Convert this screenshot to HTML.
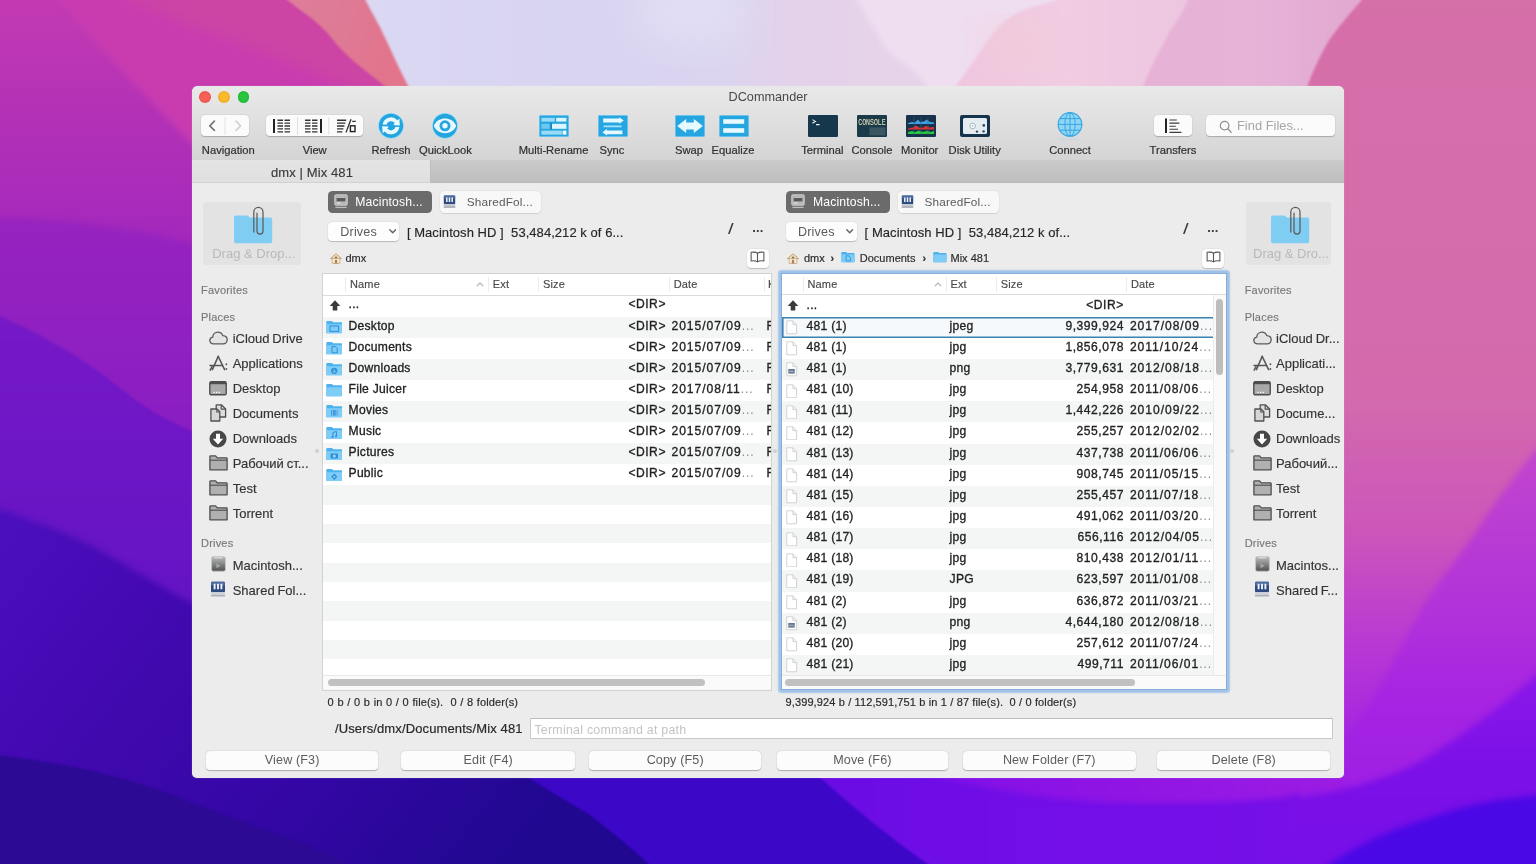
<!DOCTYPE html>
<html lang="en"><head><meta charset="utf-8"><title>DCommander</title>
<style>
*{box-sizing:border-box;margin:0;padding:0}
html,body{width:1536px;height:864px;overflow:hidden;background:#5a18c0}
body{position:relative;font-family:"Liberation Sans",sans-serif;color:#2a2a2a;font-size:13px}
.bg{position:absolute;left:0;top:0}
.win{position:absolute;left:192px;top:86px;width:1152px;height:692px;background:#ececec;border-radius:6px 6px 5px 5px;overflow:hidden;box-shadow:0 0 1px rgba(255,255,255,.6);will-change:transform}
.a{position:absolute}
.tb{position:absolute;left:0;top:0;width:1152px;height:74px;background:linear-gradient(#e9e9e9,#e1e1e1 42%,#d4d4d4)}
.title{position:absolute;left:0;top:3.6px;width:1152px;text-align:center;font-size:12.7px;color:#484848}
.dot{position:absolute;top:5px;width:11.7px;height:11.7px;border-radius:50%}
.lbl{position:absolute;top:57.9px;font-size:11.2px;color:#303030;-webkit-text-stroke:.2px #303030;text-align:center;width:100px;margin-left:-50px;white-space:nowrap}
.btn{position:absolute;background:#fbfbfb;border-radius:4px;box-shadow:0 0.5px 1px rgba(0,0,0,.22),0 0 0 .5px rgba(0,0,0,.03)}
.tabbar{position:absolute;left:0;top:74px;width:1152px;height:23px;background:linear-gradient(#c9c9c9,#bfbfbf);border-top:1px solid #cbcbcb;border-bottom:1px solid #bababa}
.tabact{position:absolute;left:0;top:74px;width:239px;height:23px;background:linear-gradient(#e4e4e4,#e0e0e0);border-bottom:1px solid #d2d2d2;border-right:1px solid #bdbdbd;text-align:center;font-size:13px;line-height:25.2px;color:#3a3a3a;letter-spacing:.1px;padding-left:2px;-webkit-text-stroke:.15px #3a3a3a}
.ic{position:absolute}
/* ---------- sidebars ---------- */
.dd{position:absolute;background:#e3e3e3;border-radius:3px}
.ddt{position:absolute;font-size:13px;color:#b9b9b9;white-space:nowrap;line-height:15px;margin-top:-.8px}
.sh{position:absolute;font-size:11px;color:#787878;line-height:13px;letter-spacing:.2px;-webkit-text-stroke:.15px #787878}
.si{position:absolute;word-spacing:-.8px;font-size:13px;color:#343434;line-height:16px;white-space:nowrap;-webkit-text-stroke:.15px #343434}
/* ---------- panels ---------- */
.ptab{position:absolute;top:105px;height:22px;border-radius:4.5px;font-size:12.2px;line-height:22px;white-space:nowrap;letter-spacing:.15px}
.ptab.on{background:#6b6b6b;color:#fff}
.ptab.off{background:#f8f8f8;color:#5a5a5a;font-size:11.8px;box-shadow:0 0 0 .5px rgba(0,0,0,.04),0 .5px 1px rgba(0,0,0,.10)}
.drv{position:absolute;top:136.4px;height:18.6px;width:71px;background:#fdfdfd;border-radius:4px;box-shadow:0 .5px 1px rgba(0,0,0,.2),0 0 0 .5px rgba(0,0,0,.03);font-size:12.6px;color:#5c5c5c;line-height:20.4px;padding-left:12px;letter-spacing:.15px}
.vol{position:absolute;top:137.5px;font-size:13px;line-height:17px;color:#262626;white-space:nowrap;letter-spacing:.05px;-webkit-text-stroke:.15px #262626}
.pth{position:absolute;top:165px;font-size:11px;line-height:14px;color:#2c2c2c;white-space:nowrap;-webkit-text-stroke:.18px #2c2c2c}
.bk{position:absolute;top:163px;width:22px;height:19px;background:#fdfdfd;border-radius:4px;box-shadow:0 .5px 1px rgba(0,0,0,.2),0 0 0 .5px rgba(0,0,0,.03)}
.tbl{position:absolute;top:188px;height:416px;background:#fff;overflow:hidden}
.th{position:absolute;top:0;height:21.7px;left:0;right:0;background:#fff;border-bottom:1px solid #dcdcdc}
.th span{position:absolute;top:4px;font-size:11px;line-height:13px;color:#484848;letter-spacing:.15px;-webkit-text-stroke:.15px #484848}
.th i{position:absolute;top:3px;width:1px;height:15px;background:#ececec}
.row{position:absolute;left:0;right:0;height:21.1px;font-size:12.1px;line-height:19.6px;color:#222;white-space:nowrap;-webkit-text-stroke:.32px #222}
.row.alt{background:#f4f5f5}
.row span{position:absolute;top:0}
.row svg{position:absolute}
.nm{letter-spacing:.25px}
.sz{text-align:right;letter-spacing:.52px;margin-left:1.4px}
.dt{letter-spacing:.96px;margin-left:-.5px}
.hs{position:absolute;height:7px;border-radius:4px;background:#c1c1c1}
.st{position:absolute;top:609px;font-size:11px;line-height:14px;color:#2a2a2a;white-space:nowrap;letter-spacing:.1px;-webkit-text-stroke:.18px #2a2a2a}
/* ---------- bottom ---------- */
.fb{position:absolute;top:665.4px;height:18.8px;background:#fcfcfc;border-radius:4px;box-shadow:0 .6px 1px rgba(0,0,0,.26),0 0 0 .5px rgba(0,0,0,.04);text-align:center;font-size:12.6px;line-height:19.4px;color:#5c5c5c;letter-spacing:.12px}
.dt b{font-weight:normal;color:#8a8a8a;-webkit-text-stroke:0 transparent}

</style></head>
<body>
<svg class="bg" width="1536" height="864" viewBox="0 0 1536 864">
<defs>
  <linearGradient id="g0" x1="0" y1="0" x2="0" y2="864" gradientUnits="userSpaceOnUse">
    <stop offset="0" stop-color="#c33ab3"/><stop offset="0.12" stop-color="#b532b6"/><stop offset="0.27" stop-color="#a429bc"/>
  </linearGradient>
  <linearGradient id="g0b" x1="0" y1="0" x2="1" y2="0" gradientUnits="userSpaceOnUse">
    <stop offset="0" stop-color="#c940b1"/><stop offset="1" stop-color="#cb3fae"/>
  </linearGradient>
  <linearGradient id="g1" x1="0" y1="218" x2="0" y2="430" gradientUnits="userSpaceOnUse">
    <stop offset="0" stop-color="#9723bf"/><stop offset="1" stop-color="#8a1ec3"/>
  </linearGradient>
  <linearGradient id="g2" x1="0" y1="320" x2="0" y2="600" gradientUnits="userSpaceOnUse">
    <stop offset="0" stop-color="#7619c7"/><stop offset="1" stop-color="#6414c5"/>
  </linearGradient>
  <linearGradient id="g3" x1="0" y1="500" x2="500" y2="900" gradientUnits="userSpaceOnUse">
    <stop offset="0" stop-color="#4c10be"/><stop offset="0.27" stop-color="#4409b3"/><stop offset="0.36" stop-color="#3f09ae"/>
    <stop offset="0.68" stop-color="#3207a3"/><stop offset="0.92" stop-color="#230894"/><stop offset="1" stop-color="#200890"/>
  </linearGradient>
  <linearGradient id="g5" x1="520" y1="0" x2="1200" y2="0" gradientUnits="userSpaceOnUse">
    <stop offset="0" stop-color="#3d08c6"/><stop offset="0.5" stop-color="#4509d2"/><stop offset="1" stop-color="#520ee0"/>
  </linearGradient>
  <linearGradient id="g6" x1="800" y1="0" x2="1536" y2="0" gradientUnits="userSpaceOnUse">
    <stop offset="0" stop-color="#6a0ce4"/><stop offset="0.3" stop-color="#720ee8"/><stop offset="1" stop-color="#7a10e8"/>
  </linearGradient>
  <linearGradient id="gB" x1="0" y1="670" x2="0" y2="864" gradientUnits="userSpaceOnUse">
    <stop offset="0" stop-color="#8c18e8"/><stop offset="0.5" stop-color="#7c10e8"/><stop offset="1" stop-color="#780fe8"/>
  </linearGradient>
  <linearGradient id="gA" x1="900" y1="0" x2="1536" y2="0" gradientUnits="userSpaceOnUse">
    <stop offset="0" stop-color="#7d10e7"/><stop offset="0.25" stop-color="#8c13e5"/><stop offset="0.7" stop-color="#9c1ce3"/><stop offset="1" stop-color="#a622e2"/>
  </linearGradient>
  <linearGradient id="gR" x1="0" y1="0" x2="0" y2="864" gradientUnits="userSpaceOnUse">
    <stop offset="0" stop-color="#d670a9"/><stop offset="0.46" stop-color="#d46aad"/>
    <stop offset="0.62" stop-color="#cb55bb"/><stop offset="0.74" stop-color="#b93ad3"/><stop offset="0.86" stop-color="#a424e2"/><stop offset="1" stop-color="#9a1ee6"/>
  </linearGradient>
  <linearGradient id="gR1" x1="0" y1="450" x2="0" y2="780" gradientUnits="userSpaceOnUse">
    <stop offset="0" stop-color="#c146cd"/><stop offset="0.5" stop-color="#b032da"/><stop offset="0.75" stop-color="#a624e2"/><stop offset="1" stop-color="#a020e4"/>
  </linearGradient>
  <linearGradient id="gR2" x1="0" y1="660" x2="0" y2="864" gradientUnits="userSpaceOnUse">
    <stop offset="0" stop-color="#9a1ee8"/><stop offset="0.5" stop-color="#7a14e8"/><stop offset="1" stop-color="#5e10e4"/>
  </linearGradient>
  <linearGradient id="gT" x1="370" y1="0" x2="870" y2="0" gradientUnits="userSpaceOnUse">
    <stop offset="0" stop-color="#dbd8f3"/><stop offset="0.46" stop-color="#d8d4f1"/><stop offset="0.7" stop-color="#dcd5f0"/>
    <stop offset="0.84" stop-color="#e3d2ea"/><stop offset="1" stop-color="#e6d3ea"/>
  </linearGradient>
  <linearGradient id="gP" x1="950" y1="0" x2="1180" y2="0" gradientUnits="userSpaceOnUse">
    <stop offset="0" stop-color="#efc6de"/><stop offset="0.5" stop-color="#f1cce2"/><stop offset="1" stop-color="#edc6e0"/>
  </linearGradient>
  <linearGradient id="gP2" x1="1140" y1="0" x2="1360" y2="0" gradientUnits="userSpaceOnUse">
    <stop offset="0" stop-color="#e6b2d6"/><stop offset="0.5" stop-color="#e7b4d8"/><stop offset="1" stop-color="#e2a8d0"/>
  </linearGradient>
  <linearGradient id="gC" x1="290" y1="0" x2="400" y2="40" gradientUnits="userSpaceOnUse">
    <stop offset="0" stop-color="#de7e9b"/><stop offset="0.5" stop-color="#df7a95"/><stop offset="1" stop-color="#e2748b"/>
  </linearGradient>
  <filter id="s1" color-interpolation-filters="sRGB" x="-5%" y="-5%" width="110%" height="110%"><feGaussianBlur stdDeviation="1.2"/></filter>
  <filter id="s3" color-interpolation-filters="sRGB" x="-5%" y="-5%" width="110%" height="110%"><feGaussianBlur stdDeviation="3"/></filter>
  <filter id="s8" color-interpolation-filters="sRGB" x="-10%" y="-10%" width="120%" height="120%"><feGaussianBlur stdDeviation="8"/></filter>
  <filter id="s20" color-interpolation-filters="sRGB" x="-20%" y="-20%" width="140%" height="140%"><feGaussianBlur stdDeviation="20"/></filter>
</defs>
<!-- left base -->
<rect x="-10" y="-10" width="1556" height="884" fill="url(#g0)"/>
<!-- pinker magenta upper wedge -->
<path d="M50 -10 C70 12 88 36 104 52 C120 68 132 82 146 96 C165 115 180 132 200 152 L420 152 L420 -10 Z" fill="#c83cb0" filter="url(#s3)"/>
<path d="M113 -10 C180 30 280 50 370 100 L420 100 L420 -10 Z" fill="#cc45a4" filter="url(#s8)"/>
<!-- coral wedge -->
<path d="M276 -10 C290 4 305 12 317 23 C328 32 334 42 341 49 C350 58 356 63 362 68 C372 76 380 82 392 92 L420 92 L372 -10 Z" fill="url(#gC)" filter="url(#s1)"/>
<!-- L1..L4 -->
<path d="M-10 217 C40 219 110 222 200 245 L700 420 V880 H-10 Z" fill="url(#g1)" filter="url(#s3)"/>
<path d="M-10 312 C40 332 90 362 130 396 C160 418 180 426 200 434 L700 600 V880 H-10 Z" fill="url(#g2)" filter="url(#s1)"/>
<path d="M-10 506 C40 522 80 538 110 556 C150 580 180 598 210 612 L600 760 L760 880 H-10 Z" fill="url(#g3)" filter="url(#s3)"/>
<path d="M-10 754 C30 759 62 764 92 771 C130 780 158 789 183 799 C225 815 265 830 306 845 C325 853 340 860 360 872 L-10 880 Z" fill="#2c0a94" filter="url(#s1)"/>
<!-- top pale lavender -->
<path d="M361 -10 C369 8 374 16 380 27 C386 40 390 48 394 57 C400 70 404 78 413 95 L1400 95 V-10 Z" fill="url(#gT)" filter="url(#s1)"/>
<path d="M852 -10 C860 6 864 12 869 20 C874 28 878 35 882 42 C890 54 898 60 908 66 C918 74 924 80 932 95 L1100 95 V-10 Z" fill="#efdef0" filter="url(#s3)"/>
<ellipse cx="690" cy="10" rx="60" ry="40" fill="#e2e0f6" filter="url(#s20)" opacity=".8"/>
<!-- pale pink -->
<path d="M950 95 C960 80 970 66 980 52 C988 40 994 32 1000 26 C1010 16 1018 12 1029 8 C1045 3 1060 1 1078 -10 L1400 -10 V95 Z" fill="url(#gP)" filter="url(#s1)"/>
<ellipse cx="1020" cy="45" rx="40" ry="22" fill="#f3ccd8" filter="url(#s20)" opacity=".7"/>
<!-- mid pink -->
<path d="M1192 -10 C1184 12 1176 22 1169 33 C1162 46 1157 56 1152 66 C1147 76 1144 84 1139 95 L1400 95 V-10 Z" fill="url(#gP2)" filter="url(#s1)"/>
<!-- bottom blue/violet -->
<path d="M500 760 C540 785 565 800 590 815 C615 835 630 846 655 870 L1546 880 V770 Z" fill="#3d07c8" filter="url(#s1)"/>
<path d="M800 760 C825 782 850 804 872 822 C895 840 915 856 940 872 L1546 880 V770 Z" fill="url(#g6)" filter="url(#s1)"/>
<!-- right strong pink -->
<path d="M1370 -10 C1352 12 1339 25 1328 42 C1318 60 1310 76 1305 95 C1300 120 1298 150 1300 200 V880 H1546 V-10 Z" fill="url(#gR)" filter="url(#s1)"/>
<!-- right diagonal layers -->
<path d="M1546 438 C1510 480 1490 510 1475 533 C1455 562 1440 580 1428 598 C1412 625 1402 645 1394 660 C1380 690 1360 720 1330 760 V880 H1546 Z" fill="url(#gR1)" filter="url(#s3)"/>
<!-- bottom -->
<path d="M900 765 C960 785 1040 800 1120 803 C1200 805 1290 800 1344 789 L1344 765 Z" fill="url(#gA)" filter="url(#s3)"/>
<path d="M1546 666 C1510 700 1470 730 1426 758 C1410 768 1390 776 1355 786 C1340 790 1320 794 1290 798 L1290 880 H1546 Z" fill="url(#gB)" filter="url(#s3)"/>
<path d="M1546 795 C1510 798 1490 801 1469 806 C1440 814 1410 824 1384 834 C1360 845 1340 856 1318 872 L1546 880 Z" fill="#4a08e6" filter="url(#s3)"/>
</svg>

<div class="win">
<div class="tb">
  <div class="dot" style="left:7.3px;background:radial-gradient(#f75f57 40%,#dd4d47)"></div>
  <div class="dot" style="left:26.4px;background:radial-gradient(#fbb92c 40%,#dca22a)"></div>
  <div class="dot" style="left:45.6px;background:radial-gradient(#27c63e 40%,#1ca733)"></div>
  <div class="title">DCommander</div>

  <!-- Navigation -->
  <div class="btn" style="left:9px;top:29px;width:48px;height:21.4px"></div>
  <svg class="ic" style="left:9px;top:29px" width="48" height="22" viewBox="0 0 48 22">
    <line x1="24" y1="2" x2="24" y2="20" stroke="#e2e2e2" stroke-width="1"/>
    <path d="M13.4 6.2 L8.8 10.8 L13.4 15.4" fill="none" stroke="#767676" stroke-width="1.7" stroke-linecap="round" stroke-linejoin="round"/>
    <path d="M35 6.2 L39.6 10.8 L35 15.4" fill="none" stroke="#d2d2d2" stroke-width="1.7" stroke-linecap="round" stroke-linejoin="round"/>
  </svg>
  <div class="lbl" style="left:36.3px">Navigation</div>

  <!-- View -->
  <div class="btn" style="left:74px;top:29px;width:97px;height:21.4px"></div>
  <svg class="ic" style="left:74px;top:29px" width="97" height="22" viewBox="0 0 97 22">
    <line x1="31.5" y1="2" x2="31.5" y2="20" stroke="#e0e0e0"/><line x1="62.7" y1="2" x2="62.7" y2="20" stroke="#e0e0e0"/>
    <g stroke="#333" stroke-width="1.35">
      <line x1="8" y1="4" x2="8" y2="18" stroke-width="2" stroke="#222"/>
      <path d="M11.5 5.2h5.5M11.5 8.1h5.5M11.5 11h5.5M11.5 13.9h5.5M11.5 16.8h5.5M18.5 5.2h5.5M18.5 8.1h5.5M18.5 11h5.5M18.5 13.9h5.5M18.5 16.8h5.5"/>
      <line x1="55" y1="4" x2="55" y2="18" stroke-width="2" stroke="#222"/>
      <path d="M39 5.2h5.5M39 8.1h5.5M39 11h5.5M39 13.9h5.5M39 16.8h5.5M46 5.2h5.5M46 8.1h5.5M46 11h5.5M46 13.9h5.5M46 16.8h5.5"/>
      <path d="M71 5.2h9.2M71 8.1h8.4M71 11h7.4M71 13.9h6.4M71 16.8h5.4"/>
      <path d="M85 4.2 L80 17.6" stroke-width="1.3"/>
      <rect x="84.4" y="10.8" width="4.6" height="5.8" fill="none" stroke-width="1.4" stroke="#222"/>
      <path d="M86.2 6.4h3.6"/>
    </g>
  </svg>
  <div class="lbl" style="left:122.7px">View</div>

  <!-- Refresh -->
  <svg class="ic" style="left:185px;top:26px" width="28" height="28" viewBox="0 0 28 28">
    <circle cx="14" cy="13.8" r="12.9" fill="#93daf6"/>
    <circle cx="14" cy="13.8" r="12.1" fill="#23a5e0"/>
    <path d="M5.6 12.6 A8.5 8.5 0 0 1 20.4 8.2 L22.4 6.4 L22.8 13.4 L15.8 13 L17.8 11 A4.8 4.8 0 0 0 9.4 12.8 Z" fill="#e8faff"/>
    <path d="M22.4 15 A8.5 8.5 0 0 1 7.6 19.4 L5.6 21.2 L5.2 14.2 L12.2 14.6 L10.2 16.6 A4.8 4.8 0 0 0 18.6 14.8 Z" fill="#e8faff"/>
    <circle cx="14" cy="13.8" r="2.7" fill="#23a5e0"/>
  </svg>
  <div class="lbl" style="left:199px">Refresh</div>

  <!-- QuickLook -->
  <svg class="ic" style="left:239px;top:26px" width="28" height="28" viewBox="0 0 28 28">
    <circle cx="14" cy="13.8" r="12.9" fill="#93daf6"/>
    <circle cx="14" cy="13.8" r="12.1" fill="#23a5e0"/>
    <path d="M2.8 13.8 C6.6 4 21.4 4 25.2 13.8 C21.4 23.6 6.6 23.6 2.8 13.8 Z" fill="#e8faff"/>
    <circle cx="14" cy="13.8" r="5.5" fill="#23a5e0"/>
    <circle cx="14" cy="13.8" r="2.7" fill="#e8faff"/>
  </svg>
  <div class="lbl" style="left:253.4px">QuickLook</div>

  <!-- Multi-Rename -->
  <svg class="ic" style="left:347px;top:29px" width="30" height="22" viewBox="0 0 30 22">
    <rect x=".4" y=".4" width="29.2" height="21.2" rx="1" fill="#25a6e1" stroke="#62c2ee" stroke-width=".8"/>
    <rect x="2.4" y="2.8" width="13.4" height="3.8" fill="#9adcf8"/><rect x="17.2" y="2.8" width="10.2" height="3.8" fill="#dcf5ff"/>
    <rect x="2.4" y="8.8" width="8.2" height="5" fill="#6fc8f2"/><rect x="11.6" y="8" width="1" height="6.4" fill="#1b6f9c"/><rect x="13" y="8.8" width="14.4" height="5" fill="#dcf5ff"/>
    <rect x="2.4" y="15.6" width="20.4" height="4" fill="#9adcf8"/><rect x="23.6" y="15.6" width="3.8" height="4" fill="#eefaff"/>
  </svg>
  <div class="lbl" style="left:361.6px">Multi-Rename</div>

  <!-- Sync -->
  <svg class="ic" style="left:406px;top:29px" width="30" height="22" viewBox="0 0 30 22">
    <rect x=".4" y=".4" width="29.2" height="21.2" rx="1" fill="#25a6e1" stroke="#62c2ee" stroke-width=".8"/>
    <path d="M5.2 3.6h16v-1.4l4.6 3.3l-4.6 3.3v-1.4h-16z" fill="#e6f9ff"/>
    <path d="M5.6 10.4h18v1.8h-18z" fill="#a9e2fa"/>
    <path d="M24.4 15.4h-15.4v-1.4l-4.6 3.3l4.6 3.3v-1.4h15.4z" fill="#e6f9ff"/>
  </svg>
  <div class="lbl" style="left:420px">Sync</div>

  <!-- Swap -->
  <svg class="ic" style="left:482.5px;top:29px" width="30" height="22" viewBox="0 0 30 22">
    <rect x=".4" y=".4" width="29.2" height="21.2" rx="1" fill="#25a6e1" stroke="#62c2ee" stroke-width=".8"/>
    <path d="M2.2 11 L11.2 4 V7.4 H18.8 V4 L27.8 11 L18.8 18 V14.6 H11.2 V18 Z" fill="#e6f9ff"/>
  </svg>
  <div class="lbl" style="left:497px">Swap</div>

  <!-- Equalize -->
  <svg class="ic" style="left:526.5px;top:29px" width="30" height="22" viewBox="0 0 30 22">
    <rect x=".4" y=".4" width="29.2" height="21.2" rx="1" fill="#25a6e1" stroke="#62c2ee" stroke-width=".8"/>
    <rect x="4.2" y="4.2" width="21" height="4.6" fill="#e6f9ff"/><rect x="4.2" y="13.2" width="21" height="4.6" fill="#e6f9ff"/>
  </svg>
  <div class="lbl" style="left:541px">Equalize</div>

  <!-- Terminal -->
  <svg class="ic" style="left:615.6px;top:29px" width="30" height="22" viewBox="0 0 30 22">
    <rect width="30" height="22" rx="1.2" fill="#15384c"/>
    <path d="M4.4 4.6 L7.4 6.4 L4.4 8.2" fill="none" stroke="#e8f2f6" stroke-width="1.1"/>
    <path d="M8 9.6h3.6" stroke="#e8f2f6" stroke-width="1.1"/>
  </svg>
  <div class="lbl" style="left:630.4px">Terminal</div>

  <!-- Console -->
  <svg class="ic" style="left:665.4px;top:29px" width="30" height="22" viewBox="0 0 30 22">
    <rect width="30" height="22" rx="1.2" fill="#1a3a4a"/>
    <rect x="12.4" y="12.4" width="16" height="8" fill="#3b5563"/>
    <text x="15" y="10" font-family="Liberation Mono,monospace" font-size="9.6" textLength="27.4" lengthAdjust="spacingAndGlyphs" text-anchor="middle" fill="#f1ecc0">CONSOLE</text>
  </svg>
  <div class="lbl" style="left:680px">Console</div>

  <!-- Monitor -->
  <svg class="ic" style="left:713.6px;top:29px" width="30" height="22" viewBox="0 0 30 22">
    <rect width="30" height="22" rx="1.2" fill="#17324a"/>
    <path d="M2 8 L6 7 L9 7.6 L12 4.6 L14 7 L18 6.6 L21 4.4 L24 7 L28 7.4 V9 H2 Z" fill="#3f9fe8"/>
    <path d="M2 13.4 L7 12.6 L10 10.6 L13 12.4 L17 12.8 L20 10.8 L23 12.6 L28 12 V14.4 H2 Z" fill="#e3312f"/>
    <path d="M2 19 V17 L6 16 L9 17 L13 15.6 L17 17 L21 15.8 L25 17 L28 16 V19 Z" fill="#27c93e"/>
    <path d="M8 2v18M15 2v18M22 2v18" stroke="#2f5a7c" stroke-width=".6"/>
  </svg>
  <div class="lbl" style="left:727.7px">Monitor</div>

  <!-- Disk Utility -->
  <svg class="ic" style="left:768.3px;top:29px" width="30" height="22" viewBox="0 0 30 22">
    <rect width="30" height="22" rx="2" fill="#15344c"/>
    <rect x="3" y="3" width="24" height="16" rx="1.6" fill="#e4ecf1"/>
    <circle cx="12.6" cy="11" r="2.8" fill="#f6f9fb" stroke="#9eacb6" stroke-width=".9"/>
    <circle cx="12.6" cy="11" r=".8" fill="#9aa8b2"/>
    <circle cx="23.8" cy="10.4" r="1.3" fill="#26465c"/><circle cx="23.6" cy="16.4" r="1.2" fill="#26465c"/><circle cx="17" cy="16.6" r="1.2" fill="#26465c"/>
    
  </svg>
  <div class="lbl" style="left:782.7px">Disk Utility</div>

  <!-- Connect -->
  <svg class="ic" style="left:864px;top:25px" width="28" height="30" viewBox="0 0 28 30">
    <circle cx="14" cy="13.4" r="11.8" fill="#8fd6f6" stroke="#37a6e0" stroke-width="1.2"/>
    <g fill="none" stroke="#37a6e0" stroke-width="1">
      <ellipse cx="14" cy="13.4" rx="5.2" ry="11.8"/>
      <path d="M14 1.6v23.6M2.2 13.4h23.6M4 7.6h20M4 19.2h20"/>
    </g>
    <path d="M3 28.2h22" stroke="#a9d6ef" stroke-width=".8" stroke-dasharray="1.4 .6"/>
  </svg>
  <div class="lbl" style="left:878px">Connect</div>

  <!-- Transfers -->
  <div class="btn" style="left:962px;top:29px;width:38px;height:21.4px"></div>
  <svg class="ic" style="left:962px;top:29px" width="38" height="22" viewBox="0 0 38 22">
    <line x1="12" y1="3.6" x2="12" y2="18" stroke="#222" stroke-width="2"/>
    <path d="M15.4 5h7.4M15.4 8.1h10M15.4 11.2h6.4M15.4 14.3h8.6M15.4 17.4h12" stroke="#3c3c3c" stroke-width="1.1"/>
  </svg>
  <div class="lbl" style="left:981px">Transfers</div>

  <!-- Search -->
  <div class="btn" style="left:1014px;top:29px;width:129px;height:21.4px"></div>
  <svg class="ic" style="left:1026px;top:33px" width="16" height="16" viewBox="0 0 16 16">
    <circle cx="6.6" cy="6.6" r="4.3" fill="none" stroke="#8e8e8e" stroke-width="1.2"/><path d="M9.8 9.8l3.4 3.6" stroke="#8e8e8e" stroke-width="1.3" stroke-linecap="round"/>
  </svg>
  <div class="a" style="left:1045px;top:32px;font-size:12.9px;color:#a6a6a6;line-height:16px;letter-spacing:0">Find Files...</div>
</div>
<div class="tabbar"></div>
<div class="tabact">dmx | Mix 481</div>

<!-- left sidebar -->
<div class="dd" style="left:11.2px;top:115.8px;width:98px;height:63px"></div>
<svg class="ic" style="left:42.4px;top:117px" width="39" height="42" viewBox="0 0 39 42"><path d="M0 14.4 Q0 12.6 1.8 12.6 H12.6 Q14 12.6 14.8 13.6 L15.6 14.6 H36.4 Q38.2 14.6 38.2 16.4 V38.4 Q38.2 40.2 36.4 40.2 H1.8 Q0 40.2 0 38.4 Z" fill="#80cdf4"/><path d="M20.6 8.6 V26.4 A3 3 0 0 0 26.6 26.4 V7.4 A4.6 4.6 0 0 0 17.4 7.4 V27.4" fill="none" stroke="#5b5b5b" stroke-width="1.25" stroke-linecap="round" transform="translate(2.4 1.6)"/></svg>
<div class="ddt" style="left:20.2px;top:160.6px">Drag &amp; Drop...</div>
<div class="sh" style="left:9px;top:197.6px">Favorites</div>
<div class="sh" style="left:9px;top:224.7px">Places</div>
<svg style="left:17px;top:245px" class="ic" width="19" height="14" viewBox="0 0 19 14"><path d="M4.6 12.9 C2.4 12.9 .8 11.4 .8 9.5 C.8 7.8 2 6.5 3.7 6.2 C3.9 3.3 6.1 1.1 8.9 1.1 C11.2 1.1 13.1 2.5 13.8 4.6 C16.3 4.7 18.2 6.5 18.2 8.8 C18.2 11.1 16.4 12.9 14 12.9 Z" fill="#e4e4e4" stroke="#5a5a5a" stroke-width="1.3" stroke-linejoin="round"/></svg>
<div class="si" style="left:40.7px;top:245.0px">iCloud Drive</div>
<svg style="left:17px;top:269px" class="ic" width="19" height="17" viewBox="0 0 19 17"><g fill="none" stroke="#555" stroke-width="1.5" stroke-linecap="round"><path d="M9.2 1.4 L3.4 14.6"/><path d="M9.2 1.4 L15.6 14.6"/><path d="M1 10.6 H13.4"/><path d="M1.2 15.2 L3 11.6"/><path d="M17.4 9.2v.1M17.4 14v.1" stroke-width="1.8"/></g></svg>
<div class="si" style="left:40.7px;top:270.3px">Applications</div>
<svg style="left:17.4px;top:295px" class="ic" width="18" height="15" viewBox="0 0 18 15"><rect x=".8" y=".8" width="16.4" height="13" rx="1.4" fill="#a9a9a9" stroke="#4e4e4e" stroke-width="1.4"/><rect x=".8" y=".8" width="16.4" height="2.4" fill="#4e4e4e"/><path d="M4.4 11.4h1.3M7 11.4h1.3M9.6 11.4h1.3" stroke="#fff" stroke-width="1.4"/></svg>
<div class="si" style="left:40.7px;top:295.1px">Desktop</div>
<svg style="left:17.8px;top:318px" class="ic" width="17" height="18" viewBox="0 0 17 18"><path d="M6.2 .8 H11.4 L15.6 5 V13 H6.2 Z" fill="#dedede" stroke="#505050" stroke-width="1.3" stroke-linejoin="round"/><path d="M11.2 1 V5.2 H15.4" fill="none" stroke="#505050" stroke-width="1.2"/><path d="M.9 5 H7 L9.8 7.8 V17 H.9 Z" fill="#d6d6d6" stroke="#505050" stroke-width="1.3" stroke-linejoin="round"/><path d="M6.8 5.2 V8 H9.6" fill="none" stroke="#505050" stroke-width="1.1"/></svg>
<div class="si" style="left:40.7px;top:319.8px">Documents</div>
<svg style="left:17.2px;top:343.6px" class="ic" width="18" height="18" viewBox="0 0 18 18"><circle cx="9" cy="9" r="8.5" fill="#474747"/><path d="M7 3.8h4v5h3.2L9 14.4 3.8 8.8H7z" fill="#fff"/></svg>
<div class="si" style="left:40.7px;top:344.7px">Downloads</div>
<svg style="left:17px;top:369px" class="ic" width="19" height="16" viewBox="0 0 19 16"><path d="M.9 14.8 V1.6 Q.9 .9 1.6 .9 H6.6 L8.2 2.8 H17.4 Q18.1 2.8 18.1 3.5 V14.8 Z" fill="#b0b0b0" stroke="#4e4e4e" stroke-width="1.3" stroke-linejoin="round"/><path d="M1 5.2H18" stroke="#4e4e4e" stroke-width="1.1"/></svg>
<div class="si" style="left:40.7px;top:369.7px">Рабочий ст...</div>
<svg style="left:17px;top:394px" class="ic" width="19" height="16" viewBox="0 0 19 16"><path d="M.9 14.8 V1.6 Q.9 .9 1.6 .9 H6.6 L8.2 2.8 H17.4 Q18.1 2.8 18.1 3.5 V14.8 Z" fill="#b0b0b0" stroke="#4e4e4e" stroke-width="1.3" stroke-linejoin="round"/><path d="M1 5.2H18" stroke="#4e4e4e" stroke-width="1.1"/></svg>
<div class="si" style="left:40.7px;top:394.7px">Test</div>
<svg style="left:17px;top:419px" class="ic" width="19" height="16" viewBox="0 0 19 16"><path d="M.9 14.8 V1.6 Q.9 .9 1.6 .9 H6.6 L8.2 2.8 H17.4 Q18.1 2.8 18.1 3.5 V14.8 Z" fill="#b0b0b0" stroke="#4e4e4e" stroke-width="1.3" stroke-linejoin="round"/><path d="M1 5.2H18" stroke="#4e4e4e" stroke-width="1.1"/></svg>
<div class="si" style="left:40.7px;top:419.7px">Torrent</div>
<div class="sh" style="left:9px;top:451.4px">Drives</div>
<svg style="left:19px;top:470.4px" class="ic" width="15" height="16" viewBox="0 0 15 16"><defs><linearGradient id="hdl" x1="0" y1="0" x2="0" y2="1"><stop offset="0" stop-color="#bcbebe"/><stop offset=".5" stop-color="#858787"/><stop offset="1" stop-color="#505252"/></linearGradient></defs><rect x=".6" y=".6" width="13.8" height="14.6" rx="1.6" fill="url(#hdl)" stroke="#c4c4c4" stroke-width=".7"/><rect x="3.4" y="1.2" width="8" height="1.2" fill="#e6e6e6" opacity=".8"/><path d="M5.4 7.4 L9.6 9.8 L5.4 12.2Z" fill="#b9baba" opacity=".7"/></svg>
<div class="si" style="left:40.7px;top:471.5px">Macintosh...</div>
<svg style="left:18.4px;top:495.4px" class="ic" width="16" height="16" viewBox="0 0 16 16"><rect x="1" y=".8" width="14" height="10.4" rx="1" fill="#2f4c80"/><rect x="1" y=".8" width="14" height="3.6" rx="1" fill="#4d6c9f"/><path d="M4.6 2.8v5.4M8 2.8v5.4M11.4 2.8v5.4" stroke="#eef3fb" stroke-width="1.9"/><path d="M.6 11.2h14.8l-.8 3.4H1.4z" fill="#cfd3d9"/><rect x=".8" y="14" width="14.4" height="1.4" rx=".6" fill="#aab0b8"/></svg>
<div class="si" style="left:40.7px;top:496.5px">Shared Fol...</div>
<!-- left panel -->
<div class="ptab on" style="left:136.3px;width:104px;padding-left:27px">Macintosh...</div>
<svg class="ic" style="left:141.6px;top:108px" width="14" height="15" viewBox="0 0 14 15"><rect x=".7" y=".7" width="12.6" height="10.6" rx="1.2" fill="#b9b9b9" stroke="#cfcfcf" stroke-width=".8"/><rect x="2.6" y="2.4" width="8.8" height="5" fill="#5a5a5a"/><rect x="2.6" y="2.4" width="8.8" height="1.4" fill="#d9d9d9"/><path d="M3 9h3.4" stroke="#eee" stroke-width="1"/><path d="M1.4 13.4h11.2" stroke="#bdbdbd" stroke-width="1.3"/></svg>
<div class="ptab off" style="left:247.8px;width:101.6px;padding-left:27px">SharedFol...</div>
<svg class="ic" style="left:251.4px;top:108.6px" width="13" height="14" viewBox="0 0 13 14"><rect x=".8" y=".6" width="11.4" height="8.6" rx=".8" fill="#2f4c80"/><rect x=".8" y=".6" width="11.4" height="3" rx=".8" fill="#4d6c9f"/><path d="M3.8 2.4v4.6M6.5 2.4v4.6M9.2 2.4v4.6" stroke="#eef3fb" stroke-width="1.5"/><path d="M.4 9.2h12.2l-.6 2.8H1z" fill="#c6c9cf"/><rect x=".6" y="11.6" width="11.8" height="1.2" rx=".5" fill="#9b9fa7"/></svg>
<div class="drv" style="left:136.3px">Drives</div>
<svg class="ic" style="left:196.6px;top:143.2px" width="7.4" height="5" viewBox="0 0 9 6"><path d="M1 1 L4.5 4.6 L8 1" fill="none" stroke="#646464" stroke-width="1.7" stroke-linecap="round" stroke-linejoin="round"/></svg>
<div class="vol" style="left:214.9px">[ Macintosh HD ]&nbsp; 53,484,212 k of 6...</div>
<div class="a" style="left:535.0px;top:134.6px;font-size:14px;font-weight:bold;font-style:italic;color:#3a3a3a;line-height:16px;margin-left:1.6px;margin-top:.6px">/</div>
<div class="a" style="left:560.2px;top:134px;font-size:13px;font-weight:bold;color:#3a3a3a;line-height:16px;letter-spacing:.2px">...</div>
<svg class="ic" style="left:137.6px;top:166.8px" width="12" height="11" viewBox="0 0 12 11"><path d="M6 .8 L11.4 5.6 H9.8 V10.4 H2.2 V5.6 H.6 Z" fill="#f8f2e6" stroke="#c3a173" stroke-width=".8" stroke-linejoin="round"/><path d="M6 .8 L11.4 5.6 H.6 Z" fill="#ecd9b8" stroke="#c3a173" stroke-width=".8" stroke-linejoin="round"/><rect x="4.8" y="6.8" width="2.4" height="3.6" fill="#b5804a"/><circle cx="6" cy="4.4" r="1" fill="#7a6a5a"/></svg>
<div class="pth" style="left:153.5px">dmx</div>
<div class="bk" style="left:554.6px"></div>
<svg class="ic" style="left:558.2px;top:165px" width="15" height="12.2" viewBox="0 0 16 13"><path d="M8 2.4 C6.4 1.2 3.6 1 1.2 1.4 V10.6 C3.6 10.2 6.4 10.4 8 11.6 C9.6 10.4 12.4 10.2 14.8 10.6 V1.4 C12.4 1 9.6 1.2 8 2.4 Z M8 2.4 V11.6" fill="none" stroke="#555" stroke-width="1.15" stroke-linejoin="round"/></svg>
<div class="tbl" style="left:131.4px;width:447.8px;box-shadow:0 0 0 1px #d2d2d2">
<div class="th"><span style="left:26.6px">Name</span><span style="left:169.4px">Ext</span><span style="left:219.6px">Size</span><span style="left:350.3px">Date</span><span style="left:444.6px">K</span><i style="left:21.6px"></i><i style="left:165.0px"></i><i style="left:214.4px"></i><i style="left:345.2px"></i><i style="left:441.0px"></i><svg class="ic" style="left:153.0px;top:8px" width="8" height="5" viewBox="0 0 8 5"><path d="M.8 4.2 L4 1 L7.2 4.2" fill="none" stroke="#b0b0b0" stroke-width="1.1"/></svg></div>
<div class="row" style="top:21.4px"><svg style="left:5.6px;top:4.4px" width="12" height="11" viewBox="0 0 12 11"><path d="M6 .3 L11.3 6 H8.3 V10.4 H3.7 V6 H.7 Z" fill="#3a3a3a"/></svg><span class="nm" style="left:25.2px">...</span><span class="sz" style="left:276.6px;width:64.6px">&lt;DIR&gt;</span></div>
<div class="row alt" style="top:42.5px"><svg class="ic" style="left:2.6px;top:3.6px" width="16.4" height="13.6" viewBox="0 0 16.4 13.6"><path d="M.3 1.9 Q.3 1 1.2 1 H5.6 Q6.2 1 6.6 1.5 L7.2 2.2 H15.2 Q16.1 2.2 16.1 3.1 V12.4 Q16.1 13.3 15.2 13.3 H1.2 Q.3 13.3 .3 12.4 Z" fill="#4fb2ee"/><path d="M.3 4.2 H16.1 V12.4 Q16.1 13.3 15.2 13.3 H1.2 Q.3 13.3 .3 12.4 Z" fill="#7fcdf7"/><rect x="4" y="6" width="8.6" height="5.4" fill="none" stroke="#2d8fd6" stroke-width="1"/></svg><span class="nm" style="left:25.2px">Desktop</span><span class="sz" style="left:276.6px;width:64.6px">&lt;DIR&gt;</span><span class="dt" style="left:348.6px">2015/07/09<b>...</b></span><span style="left:443.2px">R</span></div>
<div class="row" style="top:63.6px"><svg class="ic" style="left:2.6px;top:3.6px" width="16.4" height="13.6" viewBox="0 0 16.4 13.6"><path d="M.3 1.9 Q.3 1 1.2 1 H5.6 Q6.2 1 6.6 1.5 L7.2 2.2 H15.2 Q16.1 2.2 16.1 3.1 V12.4 Q16.1 13.3 15.2 13.3 H1.2 Q.3 13.3 .3 12.4 Z" fill="#4fb2ee"/><path d="M.3 4.2 H16.1 V12.4 Q16.1 13.3 15.2 13.3 H1.2 Q.3 13.3 .3 12.4 Z" fill="#7fcdf7"/><path d="M6 5.6h3.4l1.8 1.8v4.4H6z" fill="none" stroke="#2d8fd6" stroke-width="1"/></svg><span class="nm" style="left:25.2px">Documents</span><span class="sz" style="left:276.6px;width:64.6px">&lt;DIR&gt;</span><span class="dt" style="left:348.6px">2015/07/09<b>...</b></span><span style="left:443.2px">R</span></div>
<div class="row alt" style="top:84.7px"><svg class="ic" style="left:2.6px;top:3.6px" width="16.4" height="13.6" viewBox="0 0 16.4 13.6"><path d="M.3 1.9 Q.3 1 1.2 1 H5.6 Q6.2 1 6.6 1.5 L7.2 2.2 H15.2 Q16.1 2.2 16.1 3.1 V12.4 Q16.1 13.3 15.2 13.3 H1.2 Q.3 13.3 .3 12.4 Z" fill="#4fb2ee"/><path d="M.3 4.2 H16.1 V12.4 Q16.1 13.3 15.2 13.3 H1.2 Q.3 13.3 .3 12.4 Z" fill="#7fcdf7"/><circle cx="8.2" cy="8.8" r="3.1" fill="#2d8fd6"/><path d="M8.2 7v3.4M6.8 9.2l1.4 1.4 1.4-1.4" stroke="#9fd8f8" stroke-width=".8" fill="none"/></svg><span class="nm" style="left:25.2px">Downloads</span><span class="sz" style="left:276.6px;width:64.6px">&lt;DIR&gt;</span><span class="dt" style="left:348.6px">2015/07/09<b>...</b></span><span style="left:443.2px">R</span></div>
<div class="row" style="top:105.8px"><svg class="ic" style="left:2.6px;top:3.6px" width="16.4" height="13.6" viewBox="0 0 16.4 13.6"><path d="M.3 1.9 Q.3 1 1.2 1 H5.6 Q6.2 1 6.6 1.5 L7.2 2.2 H15.2 Q16.1 2.2 16.1 3.1 V12.4 Q16.1 13.3 15.2 13.3 H1.2 Q.3 13.3 .3 12.4 Z" fill="#4fb2ee"/><path d="M.3 4.2 H16.1 V12.4 Q16.1 13.3 15.2 13.3 H1.2 Q.3 13.3 .3 12.4 Z" fill="#7fcdf7"/></svg><span class="nm" style="left:25.2px">File Juicer</span><span class="sz" style="left:276.6px;width:64.6px">&lt;DIR&gt;</span><span class="dt" style="left:348.6px">2017/08/11<b>...</b></span><span style="left:443.2px">R</span></div>
<div class="row alt" style="top:126.9px"><svg class="ic" style="left:2.6px;top:3.6px" width="16.4" height="13.6" viewBox="0 0 16.4 13.6"><path d="M.3 1.9 Q.3 1 1.2 1 H5.6 Q6.2 1 6.6 1.5 L7.2 2.2 H15.2 Q16.1 2.2 16.1 3.1 V12.4 Q16.1 13.3 15.2 13.3 H1.2 Q.3 13.3 .3 12.4 Z" fill="#4fb2ee"/><path d="M.3 4.2 H16.1 V12.4 Q16.1 13.3 15.2 13.3 H1.2 Q.3 13.3 .3 12.4 Z" fill="#7fcdf7"/><rect x="5" y="6" width="6.6" height="5.6" fill="#3b9be0"/><path d="M6.4 6v5.6M10.2 6v5.6" stroke="#9fd8f8" stroke-width=".7"/></svg><span class="nm" style="left:25.2px">Movies</span><span class="sz" style="left:276.6px;width:64.6px">&lt;DIR&gt;</span><span class="dt" style="left:348.6px">2015/07/09<b>...</b></span><span style="left:443.2px">R</span></div>
<div class="row" style="top:148.0px"><svg class="ic" style="left:2.6px;top:3.6px" width="16.4" height="13.6" viewBox="0 0 16.4 13.6"><path d="M.3 1.9 Q.3 1 1.2 1 H5.6 Q6.2 1 6.6 1.5 L7.2 2.2 H15.2 Q16.1 2.2 16.1 3.1 V12.4 Q16.1 13.3 15.2 13.3 H1.2 Q.3 13.3 .3 12.4 Z" fill="#4fb2ee"/><path d="M.3 4.2 H16.1 V12.4 Q16.1 13.3 15.2 13.3 H1.2 Q.3 13.3 .3 12.4 Z" fill="#7fcdf7"/><path d="M7 11V6.4l3.6-.8v4.6" fill="none" stroke="#2d8fd6" stroke-width="1"/><circle cx="6.4" cy="11" r="1" fill="#2d8fd6"/><circle cx="10" cy="10.2" r="1" fill="#2d8fd6"/></svg><span class="nm" style="left:25.2px">Music</span><span class="sz" style="left:276.6px;width:64.6px">&lt;DIR&gt;</span><span class="dt" style="left:348.6px">2015/07/09<b>...</b></span><span style="left:443.2px">R</span></div>
<div class="row alt" style="top:169.1px"><svg class="ic" style="left:2.6px;top:3.6px" width="16.4" height="13.6" viewBox="0 0 16.4 13.6"><path d="M.3 1.9 Q.3 1 1.2 1 H5.6 Q6.2 1 6.6 1.5 L7.2 2.2 H15.2 Q16.1 2.2 16.1 3.1 V12.4 Q16.1 13.3 15.2 13.3 H1.2 Q.3 13.3 .3 12.4 Z" fill="#4fb2ee"/><path d="M.3 4.2 H16.1 V12.4 Q16.1 13.3 15.2 13.3 H1.2 Q.3 13.3 .3 12.4 Z" fill="#7fcdf7"/><rect x="4.6" y="6.4" width="7.4" height="5" rx=".6" fill="#2d8fd6"/><circle cx="8.3" cy="8.9" r="1.5" fill="#9fd8f8"/></svg><span class="nm" style="left:25.2px">Pictures</span><span class="sz" style="left:276.6px;width:64.6px">&lt;DIR&gt;</span><span class="dt" style="left:348.6px">2015/07/09<b>...</b></span><span style="left:443.2px">R</span></div>
<div class="row" style="top:190.2px"><svg class="ic" style="left:2.6px;top:3.6px" width="16.4" height="13.6" viewBox="0 0 16.4 13.6"><path d="M.3 1.9 Q.3 1 1.2 1 H5.6 Q6.2 1 6.6 1.5 L7.2 2.2 H15.2 Q16.1 2.2 16.1 3.1 V12.4 Q16.1 13.3 15.2 13.3 H1.2 Q.3 13.3 .3 12.4 Z" fill="#4fb2ee"/><path d="M.3 4.2 H16.1 V12.4 Q16.1 13.3 15.2 13.3 H1.2 Q.3 13.3 .3 12.4 Z" fill="#7fcdf7"/><path d="M8.3 5.6l3 3.2-3 3.2-3-3.2z" fill="#2d8fd6"/><circle cx="8.3" cy="8.8" r="1" fill="#9fd8f8"/></svg><span class="nm" style="left:25.2px">Public</span><span class="sz" style="left:276.6px;width:64.6px">&lt;DIR&gt;</span><span class="dt" style="left:348.6px">2015/07/09<b>...</b></span><span style="left:443.2px">R</span></div>
<div class="row alt" style="top:211.3px;height:19.35px"></div>
<div class="row" style="top:230.65px;height:19.35px"></div>
<div class="row alt" style="top:250.0px;height:19.35px"></div>
<div class="row" style="top:269.35px;height:19.35px"></div>
<div class="row alt" style="top:288.7px;height:19.35px"></div>
<div class="row" style="top:308.05px;height:19.35px"></div>
<div class="row alt" style="top:327.4px;height:19.35px"></div>
<div class="row" style="top:346.75px;height:19.35px"></div>
<div class="row alt" style="top:366.1px;height:19.35px"></div>
<div class="row" style="top:385.45px;height:19.35px"></div>
<div class="row alt" style="top:404.8px;height:19.35px"></div>
<div class="a" style="left:0;right:0;top:401.2px;height:14px;background:#fafafa;border-top:1px solid #e8e8e8"></div>
<div class="hs" style="left:4.6px;top:404.8px;width:377px"></div>
</div>
<div class="st" style="left:135.6px;word-spacing:.45px">0 b / 0 b in 0 / 0 file(s).&nbsp; 0 / 8 folder(s)</div>
<div class="a" style="left:123.4px;top:362.6px;width:4px;height:4px;border-radius:50%;background:#d0d0d0"></div>
<!-- right panel -->
<div class="ptab on" style="left:594.0px;width:104px;padding-left:27px">Macintosh...</div>
<svg class="ic" style="left:599.3px;top:108px" width="14" height="15" viewBox="0 0 14 15"><rect x=".7" y=".7" width="12.6" height="10.6" rx="1.2" fill="#b9b9b9" stroke="#cfcfcf" stroke-width=".8"/><rect x="2.6" y="2.4" width="8.8" height="5" fill="#5a5a5a"/><rect x="2.6" y="2.4" width="8.8" height="1.4" fill="#d9d9d9"/><path d="M3 9h3.4" stroke="#eee" stroke-width="1"/><path d="M1.4 13.4h11.2" stroke="#bdbdbd" stroke-width="1.3"/></svg>
<div class="ptab off" style="left:705.5px;width:101.6px;padding-left:27px">SharedFol...</div>
<svg class="ic" style="left:709.1px;top:108.6px" width="13" height="14" viewBox="0 0 13 14"><rect x=".8" y=".6" width="11.4" height="8.6" rx=".8" fill="#2f4c80"/><rect x=".8" y=".6" width="11.4" height="3" rx=".8" fill="#4d6c9f"/><path d="M3.8 2.4v4.6M6.5 2.4v4.6M9.2 2.4v4.6" stroke="#eef3fb" stroke-width="1.5"/><path d="M.4 9.2h12.2l-.6 2.8H1z" fill="#c6c9cf"/><rect x=".6" y="11.6" width="11.8" height="1.2" rx=".5" fill="#9b9fa7"/></svg>
<div class="drv" style="left:594.0px">Drives</div>
<svg class="ic" style="left:654.3px;top:143.2px" width="7.4" height="5" viewBox="0 0 9 6"><path d="M1 1 L4.5 4.6 L8 1" fill="none" stroke="#646464" stroke-width="1.7" stroke-linecap="round" stroke-linejoin="round"/></svg>
<div class="vol" style="left:672.6px">[ Macintosh HD ]&nbsp; 53,484,212 k of...</div>
<div class="a" style="left:990.0px;top:134.6px;font-size:14px;font-weight:bold;font-style:italic;color:#3a3a3a;line-height:16px;margin-left:1.6px;margin-top:.6px">/</div>
<div class="a" style="left:1015.2px;top:134px;font-size:13px;font-weight:bold;color:#3a3a3a;line-height:16px;letter-spacing:.2px">...</div>
<svg class="ic" style="left:595.3px;top:166.8px" width="12" height="11" viewBox="0 0 12 11"><path d="M6 .8 L11.4 5.6 H9.8 V10.4 H2.2 V5.6 H.6 Z" fill="#f8f2e6" stroke="#c3a173" stroke-width=".8" stroke-linejoin="round"/><path d="M6 .8 L11.4 5.6 H.6 Z" fill="#ecd9b8" stroke="#c3a173" stroke-width=".8" stroke-linejoin="round"/><rect x="4.8" y="6.8" width="2.4" height="3.6" fill="#b5804a"/><circle cx="6" cy="4.4" r="1" fill="#7a6a5a"/></svg>
<div class="pth" style="left:612px">dmx</div>
<div class="pth" style="left:638.4px;font-weight:bold;font-size:11px">›</div>
<svg class="ic" style="left:649.3px;top:165.4px" width="13.8" height="11.6" viewBox="0 0 16.4 13.6"><path d="M.3 1.9 Q.3 1 1.2 1 H5.6 Q6.2 1 6.6 1.5 L7.2 2.2 H15.2 Q16.1 2.2 16.1 3.1 V12.4 Q16.1 13.3 15.2 13.3 H1.2 Q.3 13.3 .3 12.4 Z" fill="#4fb2ee"/><path d="M.3 4.2 H16.1 V12.4 Q16.1 13.3 15.2 13.3 H1.2 Q.3 13.3 .3 12.4 Z" fill="#7fcdf7"/><path d="M6 5.6h3.4l1.8 1.8v4.4H6z" fill="none" stroke="#2d8fd6" stroke-width="1"/></svg>
<div class="pth" style="left:667.8px">Documents</div>
<div class="pth" style="left:730.4px;font-weight:bold;font-size:11px">›</div>
<svg class="ic" style="left:740.8px;top:165.4px" width="13.8" height="11.6" viewBox="0 0 16.4 13.6"><path d="M.3 1.9 Q.3 1 1.2 1 H5.6 Q6.2 1 6.6 1.5 L7.2 2.2 H15.2 Q16.1 2.2 16.1 3.1 V12.4 Q16.1 13.3 15.2 13.3 H1.2 Q.3 13.3 .3 12.4 Z" fill="#4fb2ee"/><path d="M.3 4.2 H16.1 V12.4 Q16.1 13.3 15.2 13.3 H1.2 Q.3 13.3 .3 12.4 Z" fill="#7fcdf7"/></svg>
<div class="pth" style="left:758.5px">Mix 481</div>
<div class="bk" style="left:1010.2px"></div>
<svg class="ic" style="left:1013.6px;top:165px" width="15" height="12.2" viewBox="0 0 16 13"><path d="M8 2.4 C6.4 1.2 3.6 1 1.2 1.4 V10.6 C3.6 10.2 6.4 10.4 8 11.6 C9.6 10.4 12.4 10.2 14.8 10.6 V1.4 C12.4 1 9.6 1.2 8 2.4 Z M8 2.4 V11.6" fill="none" stroke="#555" stroke-width="1.15" stroke-linejoin="round"/></svg>
<div class="a" style="left:586.8px;top:185px;width:450.6px;height:420.6px;border-radius:2.5px;background:#a2c2e6;box-shadow:0 0 0 1px rgba(170,200,232,.75),0 0 2px 1px rgba(170,200,232,.5)"></div>
<div class="tbl" style="left:589.6px;top:187.8px;width:444.8px;height:415px;box-shadow:0 0 0 1px #84aedc">
<div class="th"><span style="left:25.9px">Name</span><span style="left:168.9px">Ext</span><span style="left:219.2px">Size</span><span style="left:349.4px">Date</span><i style="left:21.0px"></i><i style="left:164.2px"></i><i style="left:214.0px"></i><i style="left:344.6px"></i><svg class="ic" style="left:152.4px;top:8px" width="8" height="5" viewBox="0 0 8 5"><path d="M.8 4.2 L4 1 L7.2 4.2" fill="none" stroke="#b0b0b0" stroke-width="1.1"/></svg></div>
<div class="row" style="top:21.8px"><svg style="left:5.0px;top:4.4px" width="12" height="11" viewBox="0 0 12 11"><path d="M6 .3 L11.3 6 H8.3 V10.4 H3.7 V6 H.7 Z" fill="#3a3a3a"/></svg><span class="nm" style="left:25.0px">...</span><span class="sz" style="left:268.4px;width:72.4px">&lt;DIR&gt;</span></div>
<div class="row" style="top:42.94px;background:#f5f9fc;box-shadow:inset 0 1.6px 0 #3a84b2,inset 0 -1.6px 0 #3a84b2,inset 1.6px 0 0 #3a84b2"><svg style="left:4.8px;top:3.4px" width="11.4" height="14.6" viewBox="0 0 13 16"><path d="M.9 .6 H8 L12.1 4.8 V15.4 H.9 Z" fill="#fff" stroke="#cdcdcd" stroke-width="1" stroke-linejoin="round"/><path d="M7.9 .8 V5 H12" fill="#f2f2f2" stroke="#c8c8c8" stroke-width=".9"/></svg><span class="nm" style="left:25.0px">481 (1)</span><span class="nm" style="left:168.0px">jpeg</span><span class="sz" style="left:258.4px;width:82.6px">9,399,924</span><span class="dt" style="left:348.8px">2017/08/09<b>...</b></span></div>
<div class="row" style="top:64.08px"><svg style="left:4.8px;top:3.4px" width="11.4" height="14.6" viewBox="0 0 13 16"><path d="M.9 .6 H8 L12.1 4.8 V15.4 H.9 Z" fill="#fff" stroke="#cdcdcd" stroke-width="1" stroke-linejoin="round"/><path d="M7.9 .8 V5 H12" fill="#f2f2f2" stroke="#c8c8c8" stroke-width=".9"/></svg><span class="nm" style="left:25.0px">481 (1)</span><span class="nm" style="left:168.0px">jpg</span><span class="sz" style="left:258.4px;width:82.6px">1,856,078</span><span class="dt" style="left:348.8px">2011/10/24<b>...</b></span></div>
<div class="row alt" style="top:85.22px"><svg style="left:4.8px;top:3.4px" width="11.4" height="14.6" viewBox="0 0 13 16"><path d="M.9 .6 H8 L12.1 4.8 V15.4 H.9 Z" fill="#fff" stroke="#cdcdcd" stroke-width="1" stroke-linejoin="round"/><path d="M7.9 .8 V5 H12" fill="#f2f2f2" stroke="#c8c8c8" stroke-width=".9"/><rect x="2.6" y="7.6" width="7.4" height="5.4" fill="#66788f"/><path d="M3.4 11.6l1.8-2 1.2 1.2 1-.8 1.4 1.6" stroke="#e8f0f8" stroke-width=".7" fill="none"/></svg><span class="nm" style="left:25.0px">481 (1)</span><span class="nm" style="left:168.0px">png</span><span class="sz" style="left:258.4px;width:82.6px">3,779,631</span><span class="dt" style="left:348.8px">2012/08/18<b>...</b></span></div>
<div class="row" style="top:106.36px"><svg style="left:4.8px;top:3.4px" width="11.4" height="14.6" viewBox="0 0 13 16"><path d="M.9 .6 H8 L12.1 4.8 V15.4 H.9 Z" fill="#fff" stroke="#cdcdcd" stroke-width="1" stroke-linejoin="round"/><path d="M7.9 .8 V5 H12" fill="#f2f2f2" stroke="#c8c8c8" stroke-width=".9"/></svg><span class="nm" style="left:25.0px">481 (10)</span><span class="nm" style="left:168.0px">jpg</span><span class="sz" style="left:258.4px;width:82.6px">254,958</span><span class="dt" style="left:348.8px">2011/08/06<b>...</b></span></div>
<div class="row alt" style="top:127.5px"><svg style="left:4.8px;top:3.4px" width="11.4" height="14.6" viewBox="0 0 13 16"><path d="M.9 .6 H8 L12.1 4.8 V15.4 H.9 Z" fill="#fff" stroke="#cdcdcd" stroke-width="1" stroke-linejoin="round"/><path d="M7.9 .8 V5 H12" fill="#f2f2f2" stroke="#c8c8c8" stroke-width=".9"/></svg><span class="nm" style="left:25.0px">481 (11)</span><span class="nm" style="left:168.0px">jpg</span><span class="sz" style="left:258.4px;width:82.6px">1,442,226</span><span class="dt" style="left:348.8px">2010/09/22<b>...</b></span></div>
<div class="row" style="top:148.64px"><svg style="left:4.8px;top:3.4px" width="11.4" height="14.6" viewBox="0 0 13 16"><path d="M.9 .6 H8 L12.1 4.8 V15.4 H.9 Z" fill="#fff" stroke="#cdcdcd" stroke-width="1" stroke-linejoin="round"/><path d="M7.9 .8 V5 H12" fill="#f2f2f2" stroke="#c8c8c8" stroke-width=".9"/></svg><span class="nm" style="left:25.0px">481 (12)</span><span class="nm" style="left:168.0px">jpg</span><span class="sz" style="left:258.4px;width:82.6px">255,257</span><span class="dt" style="left:348.8px">2012/02/02<b>...</b></span></div>
<div class="row alt" style="top:169.78px"><svg style="left:4.8px;top:3.4px" width="11.4" height="14.6" viewBox="0 0 13 16"><path d="M.9 .6 H8 L12.1 4.8 V15.4 H.9 Z" fill="#fff" stroke="#cdcdcd" stroke-width="1" stroke-linejoin="round"/><path d="M7.9 .8 V5 H12" fill="#f2f2f2" stroke="#c8c8c8" stroke-width=".9"/></svg><span class="nm" style="left:25.0px">481 (13)</span><span class="nm" style="left:168.0px">jpg</span><span class="sz" style="left:258.4px;width:82.6px">437,738</span><span class="dt" style="left:348.8px">2011/06/06<b>...</b></span></div>
<div class="row" style="top:190.92px"><svg style="left:4.8px;top:3.4px" width="11.4" height="14.6" viewBox="0 0 13 16"><path d="M.9 .6 H8 L12.1 4.8 V15.4 H.9 Z" fill="#fff" stroke="#cdcdcd" stroke-width="1" stroke-linejoin="round"/><path d="M7.9 .8 V5 H12" fill="#f2f2f2" stroke="#c8c8c8" stroke-width=".9"/></svg><span class="nm" style="left:25.0px">481 (14)</span><span class="nm" style="left:168.0px">jpg</span><span class="sz" style="left:258.4px;width:82.6px">908,745</span><span class="dt" style="left:348.8px">2011/05/15<b>...</b></span></div>
<div class="row alt" style="top:212.06px"><svg style="left:4.8px;top:3.4px" width="11.4" height="14.6" viewBox="0 0 13 16"><path d="M.9 .6 H8 L12.1 4.8 V15.4 H.9 Z" fill="#fff" stroke="#cdcdcd" stroke-width="1" stroke-linejoin="round"/><path d="M7.9 .8 V5 H12" fill="#f2f2f2" stroke="#c8c8c8" stroke-width=".9"/></svg><span class="nm" style="left:25.0px">481 (15)</span><span class="nm" style="left:168.0px">jpg</span><span class="sz" style="left:258.4px;width:82.6px">255,457</span><span class="dt" style="left:348.8px">2011/07/18<b>...</b></span></div>
<div class="row" style="top:233.2px"><svg style="left:4.8px;top:3.4px" width="11.4" height="14.6" viewBox="0 0 13 16"><path d="M.9 .6 H8 L12.1 4.8 V15.4 H.9 Z" fill="#fff" stroke="#cdcdcd" stroke-width="1" stroke-linejoin="round"/><path d="M7.9 .8 V5 H12" fill="#f2f2f2" stroke="#c8c8c8" stroke-width=".9"/></svg><span class="nm" style="left:25.0px">481 (16)</span><span class="nm" style="left:168.0px">jpg</span><span class="sz" style="left:258.4px;width:82.6px">491,062</span><span class="dt" style="left:348.8px">2011/03/20<b>...</b></span></div>
<div class="row alt" style="top:254.34px"><svg style="left:4.8px;top:3.4px" width="11.4" height="14.6" viewBox="0 0 13 16"><path d="M.9 .6 H8 L12.1 4.8 V15.4 H.9 Z" fill="#fff" stroke="#cdcdcd" stroke-width="1" stroke-linejoin="round"/><path d="M7.9 .8 V5 H12" fill="#f2f2f2" stroke="#c8c8c8" stroke-width=".9"/></svg><span class="nm" style="left:25.0px">481 (17)</span><span class="nm" style="left:168.0px">jpg</span><span class="sz" style="left:258.4px;width:82.6px">656,116</span><span class="dt" style="left:348.8px">2012/04/05<b>...</b></span></div>
<div class="row" style="top:275.48px"><svg style="left:4.8px;top:3.4px" width="11.4" height="14.6" viewBox="0 0 13 16"><path d="M.9 .6 H8 L12.1 4.8 V15.4 H.9 Z" fill="#fff" stroke="#cdcdcd" stroke-width="1" stroke-linejoin="round"/><path d="M7.9 .8 V5 H12" fill="#f2f2f2" stroke="#c8c8c8" stroke-width=".9"/></svg><span class="nm" style="left:25.0px">481 (18)</span><span class="nm" style="left:168.0px">jpg</span><span class="sz" style="left:258.4px;width:82.6px">810,438</span><span class="dt" style="left:348.8px">2012/01/11<b>...</b></span></div>
<div class="row alt" style="top:296.62px"><svg style="left:4.8px;top:3.4px" width="11.4" height="14.6" viewBox="0 0 13 16"><path d="M.9 .6 H8 L12.1 4.8 V15.4 H.9 Z" fill="#fff" stroke="#cdcdcd" stroke-width="1" stroke-linejoin="round"/><path d="M7.9 .8 V5 H12" fill="#f2f2f2" stroke="#c8c8c8" stroke-width=".9"/></svg><span class="nm" style="left:25.0px">481 (19)</span><span class="nm" style="left:168.0px">JPG</span><span class="sz" style="left:258.4px;width:82.6px">623,597</span><span class="dt" style="left:348.8px">2011/01/08<b>...</b></span></div>
<div class="row" style="top:317.76px"><svg style="left:4.8px;top:3.4px" width="11.4" height="14.6" viewBox="0 0 13 16"><path d="M.9 .6 H8 L12.1 4.8 V15.4 H.9 Z" fill="#fff" stroke="#cdcdcd" stroke-width="1" stroke-linejoin="round"/><path d="M7.9 .8 V5 H12" fill="#f2f2f2" stroke="#c8c8c8" stroke-width=".9"/></svg><span class="nm" style="left:25.0px">481 (2)</span><span class="nm" style="left:168.0px">jpg</span><span class="sz" style="left:258.4px;width:82.6px">636,872</span><span class="dt" style="left:348.8px">2011/03/21<b>...</b></span></div>
<div class="row alt" style="top:338.9px"><svg style="left:4.8px;top:3.4px" width="11.4" height="14.6" viewBox="0 0 13 16"><path d="M.9 .6 H8 L12.1 4.8 V15.4 H.9 Z" fill="#fff" stroke="#cdcdcd" stroke-width="1" stroke-linejoin="round"/><path d="M7.9 .8 V5 H12" fill="#f2f2f2" stroke="#c8c8c8" stroke-width=".9"/><rect x="2.6" y="7.6" width="7.4" height="5.4" fill="#66788f"/><path d="M3.4 11.6l1.8-2 1.2 1.2 1-.8 1.4 1.6" stroke="#e8f0f8" stroke-width=".7" fill="none"/></svg><span class="nm" style="left:25.0px">481 (2)</span><span class="nm" style="left:168.0px">png</span><span class="sz" style="left:258.4px;width:82.6px">4,644,180</span><span class="dt" style="left:348.8px">2012/08/18<b>...</b></span></div>
<div class="row" style="top:360.04px"><svg style="left:4.8px;top:3.4px" width="11.4" height="14.6" viewBox="0 0 13 16"><path d="M.9 .6 H8 L12.1 4.8 V15.4 H.9 Z" fill="#fff" stroke="#cdcdcd" stroke-width="1" stroke-linejoin="round"/><path d="M7.9 .8 V5 H12" fill="#f2f2f2" stroke="#c8c8c8" stroke-width=".9"/></svg><span class="nm" style="left:25.0px">481 (20)</span><span class="nm" style="left:168.0px">jpg</span><span class="sz" style="left:258.4px;width:82.6px">257,612</span><span class="dt" style="left:348.8px">2011/07/24<b>...</b></span></div>
<div class="row alt" style="top:381.18px"><svg style="left:4.8px;top:3.4px" width="11.4" height="14.6" viewBox="0 0 13 16"><path d="M.9 .6 H8 L12.1 4.8 V15.4 H.9 Z" fill="#fff" stroke="#cdcdcd" stroke-width="1" stroke-linejoin="round"/><path d="M7.9 .8 V5 H12" fill="#f2f2f2" stroke="#c8c8c8" stroke-width=".9"/></svg><span class="nm" style="left:25.0px">481 (21)</span><span class="nm" style="left:168.0px">jpg</span><span class="sz" style="left:258.4px;width:82.6px">499,711</span><span class="dt" style="left:348.8px">2011/06/01<b>...</b></span></div>
<div class="row" style="top:402.32px"></div>
<div class="row alt" style="top:423.46px"></div>
<div class="a" style="left:431.4px;top:21.6px;width:13.4px;bottom:0;background:#fafafa;border-left:1px solid #ebebeb"></div>
<div class="a" style="left:0;right:0;top:401.59999999999997px;height:14px;background:#fafafa;border-top:1px solid #e8e8e8"></div>
<div class="hs" style="left:3.4px;top:405.2px;width:350px"></div>
<div class="a" style="left:434.0px;top:24.80000000000001px;width:7.4px;height:76.6px;border-radius:4px;background:#bdbdbd"></div>
</div>
<div class="st" style="left:593.6px;word-spacing:.1px">9,399,924 b / 112,591,751 b in 1 / 87 file(s).&nbsp; 0 / 0 folder(s)</div>
<!-- right sidebar -->
<div class="dd" style="left:1054.3px;top:115.8px;width:85px;height:63px"></div>
<svg class="ic" style="left:1079px;top:117px" width="39" height="42" viewBox="0 0 39 42"><path d="M0 14.4 Q0 12.6 1.8 12.6 H12.6 Q14 12.6 14.8 13.6 L15.6 14.6 H36.4 Q38.2 14.6 38.2 16.4 V38.4 Q38.2 40.2 36.4 40.2 H1.8 Q0 40.2 0 38.4 Z" fill="#80cdf4"/><path d="M20.6 8.6 V26.4 A3 3 0 0 0 26.6 26.4 V7.4 A4.6 4.6 0 0 0 17.4 7.4 V27.4" fill="none" stroke="#5b5b5b" stroke-width="1.25" stroke-linecap="round" transform="translate(2.4 1.6)"/></svg>
<div class="ddt" style="left:1061px;top:160.6px">Drag &amp; Dro...</div>
<div class="sh" style="left:1052.7px;top:197.6px">Favorites</div>
<div class="sh" style="left:1052.7px;top:224.7px">Places</div>
<svg style="left:1061px;top:245px" class="ic" width="19" height="14" viewBox="0 0 19 14"><path d="M4.6 12.9 C2.4 12.9 .8 11.4 .8 9.5 C.8 7.8 2 6.5 3.7 6.2 C3.9 3.3 6.1 1.1 8.9 1.1 C11.2 1.1 13.1 2.5 13.8 4.6 C16.3 4.7 18.2 6.5 18.2 8.8 C18.2 11.1 16.4 12.9 14 12.9 Z" fill="#e4e4e4" stroke="#5a5a5a" stroke-width="1.3" stroke-linejoin="round"/></svg>
<div class="si" style="left:1084px;top:245.0px">iCloud Dr...</div>
<svg style="left:1061px;top:269px" class="ic" width="19" height="17" viewBox="0 0 19 17"><g fill="none" stroke="#555" stroke-width="1.5" stroke-linecap="round"><path d="M9.2 1.4 L3.4 14.6"/><path d="M9.2 1.4 L15.6 14.6"/><path d="M1 10.6 H13.4"/><path d="M1.2 15.2 L3 11.6"/><path d="M17.4 9.2v.1M17.4 14v.1" stroke-width="1.8"/></g></svg>
<div class="si" style="left:1084px;top:270.3px">Applicati...</div>
<svg style="left:1061.4px;top:295px" class="ic" width="18" height="15" viewBox="0 0 18 15"><rect x=".8" y=".8" width="16.4" height="13" rx="1.4" fill="#a9a9a9" stroke="#4e4e4e" stroke-width="1.4"/><rect x=".8" y=".8" width="16.4" height="2.4" fill="#4e4e4e"/><path d="M4.4 11.4h1.3M7 11.4h1.3M9.6 11.4h1.3" stroke="#fff" stroke-width="1.4"/></svg>
<div class="si" style="left:1084px;top:295.1px">Desktop</div>
<svg style="left:1061.8px;top:318px" class="ic" width="17" height="18" viewBox="0 0 17 18"><path d="M6.2 .8 H11.4 L15.6 5 V13 H6.2 Z" fill="#dedede" stroke="#505050" stroke-width="1.3" stroke-linejoin="round"/><path d="M11.2 1 V5.2 H15.4" fill="none" stroke="#505050" stroke-width="1.2"/><path d="M.9 5 H7 L9.8 7.8 V17 H.9 Z" fill="#d6d6d6" stroke="#505050" stroke-width="1.3" stroke-linejoin="round"/><path d="M6.8 5.2 V8 H9.6" fill="none" stroke="#505050" stroke-width="1.1"/></svg>
<div class="si" style="left:1084px;top:319.8px">Docume...</div>
<svg style="left:1061.2px;top:343.6px" class="ic" width="18" height="18" viewBox="0 0 18 18"><circle cx="9" cy="9" r="8.5" fill="#474747"/><path d="M7 3.8h4v5h3.2L9 14.4 3.8 8.8H7z" fill="#fff"/></svg>
<div class="si" style="left:1084px;top:344.7px">Downloads</div>
<svg style="left:1061px;top:369px" class="ic" width="19" height="16" viewBox="0 0 19 16"><path d="M.9 14.8 V1.6 Q.9 .9 1.6 .9 H6.6 L8.2 2.8 H17.4 Q18.1 2.8 18.1 3.5 V14.8 Z" fill="#b0b0b0" stroke="#4e4e4e" stroke-width="1.3" stroke-linejoin="round"/><path d="M1 5.2H18" stroke="#4e4e4e" stroke-width="1.1"/></svg>
<div class="si" style="left:1084px;top:369.7px">Рабочий...</div>
<svg style="left:1061px;top:394px" class="ic" width="19" height="16" viewBox="0 0 19 16"><path d="M.9 14.8 V1.6 Q.9 .9 1.6 .9 H6.6 L8.2 2.8 H17.4 Q18.1 2.8 18.1 3.5 V14.8 Z" fill="#b0b0b0" stroke="#4e4e4e" stroke-width="1.3" stroke-linejoin="round"/><path d="M1 5.2H18" stroke="#4e4e4e" stroke-width="1.1"/></svg>
<div class="si" style="left:1084px;top:394.7px">Test</div>
<svg style="left:1061px;top:419px" class="ic" width="19" height="16" viewBox="0 0 19 16"><path d="M.9 14.8 V1.6 Q.9 .9 1.6 .9 H6.6 L8.2 2.8 H17.4 Q18.1 2.8 18.1 3.5 V14.8 Z" fill="#b0b0b0" stroke="#4e4e4e" stroke-width="1.3" stroke-linejoin="round"/><path d="M1 5.2H18" stroke="#4e4e4e" stroke-width="1.1"/></svg>
<div class="si" style="left:1084px;top:419.7px">Torrent</div>
<div class="sh" style="left:1052.7px;top:451.4px">Drives</div>
<svg style="left:1063px;top:470.4px" class="ic" width="15" height="16" viewBox="0 0 15 16"><defs><linearGradient id="hdr" x1="0" y1="0" x2="0" y2="1"><stop offset="0" stop-color="#bcbebe"/><stop offset=".5" stop-color="#858787"/><stop offset="1" stop-color="#505252"/></linearGradient></defs><rect x=".6" y=".6" width="13.8" height="14.6" rx="1.6" fill="url(#hdr)" stroke="#c4c4c4" stroke-width=".7"/><rect x="3.4" y="1.2" width="8" height="1.2" fill="#e6e6e6" opacity=".8"/><path d="M5.4 7.4 L9.6 9.8 L5.4 12.2Z" fill="#b9baba" opacity=".7"/></svg>
<div class="si" style="left:1084px;top:471.5px">Macintos...</div>
<svg style="left:1062.4px;top:495.4px" class="ic" width="16" height="16" viewBox="0 0 16 16"><rect x="1" y=".8" width="14" height="10.4" rx="1" fill="#2f4c80"/><rect x="1" y=".8" width="14" height="3.6" rx="1" fill="#4d6c9f"/><path d="M4.6 2.8v5.4M8 2.8v5.4M11.4 2.8v5.4" stroke="#eef3fb" stroke-width="1.9"/><path d="M.6 11.2h14.8l-.8 3.4H1.4z" fill="#cfd3d9"/><rect x=".8" y="14" width="14.4" height="1.4" rx=".6" fill="#aab0b8"/></svg>
<div class="si" style="left:1084px;top:496.5px">Shared F...</div>
<div class="a" style="left:581px;top:362.6px;width:4px;height:4px;border-radius:50%;background:#d0d0d0"></div>
<div class="a" style="left:1037.6px;top:362.6px;width:4px;height:4px;border-radius:50%;background:#d0d0d0"></div>
<div class="a" style="left:108px;top:635px;width:222.60000000000002px;text-align:right;font-size:13px;line-height:16px;color:#2a2a2a;white-space:nowrap;letter-spacing:.12px;-webkit-text-stroke:.2px #2a2a2a">/Users/dmx/Documents/Mix 481</div>
<div class="a" style="left:338px;top:631.6px;width:803.4000000000001px;height:21.2px;background:#fff;border:1px solid #c9c9c9;border-top-color:#bcbcbc"></div>
<div class="a" style="left:342.4px;top:635.6px;font-size:12.4px;line-height:16px;color:#c4c4c4;letter-spacing:.25px">Terminal command at path</div>
<div class="fb" style="left:14px;width:172.4px">View (F3)</div>
<div class="fb" style="left:209.4px;width:173.6px">Edit (F4)</div>
<div class="fb" style="left:397px;width:172.4px">Copy (F5)</div>
<div class="fb" style="left:584.6px;width:171.6px">Move (F6)</div>
<div class="fb" style="left:771px;width:172.6px">New Folder (F7)</div>
<div class="fb" style="left:965.4px;width:172.6px">Delete (F8)</div>
</div>
</body></html>
